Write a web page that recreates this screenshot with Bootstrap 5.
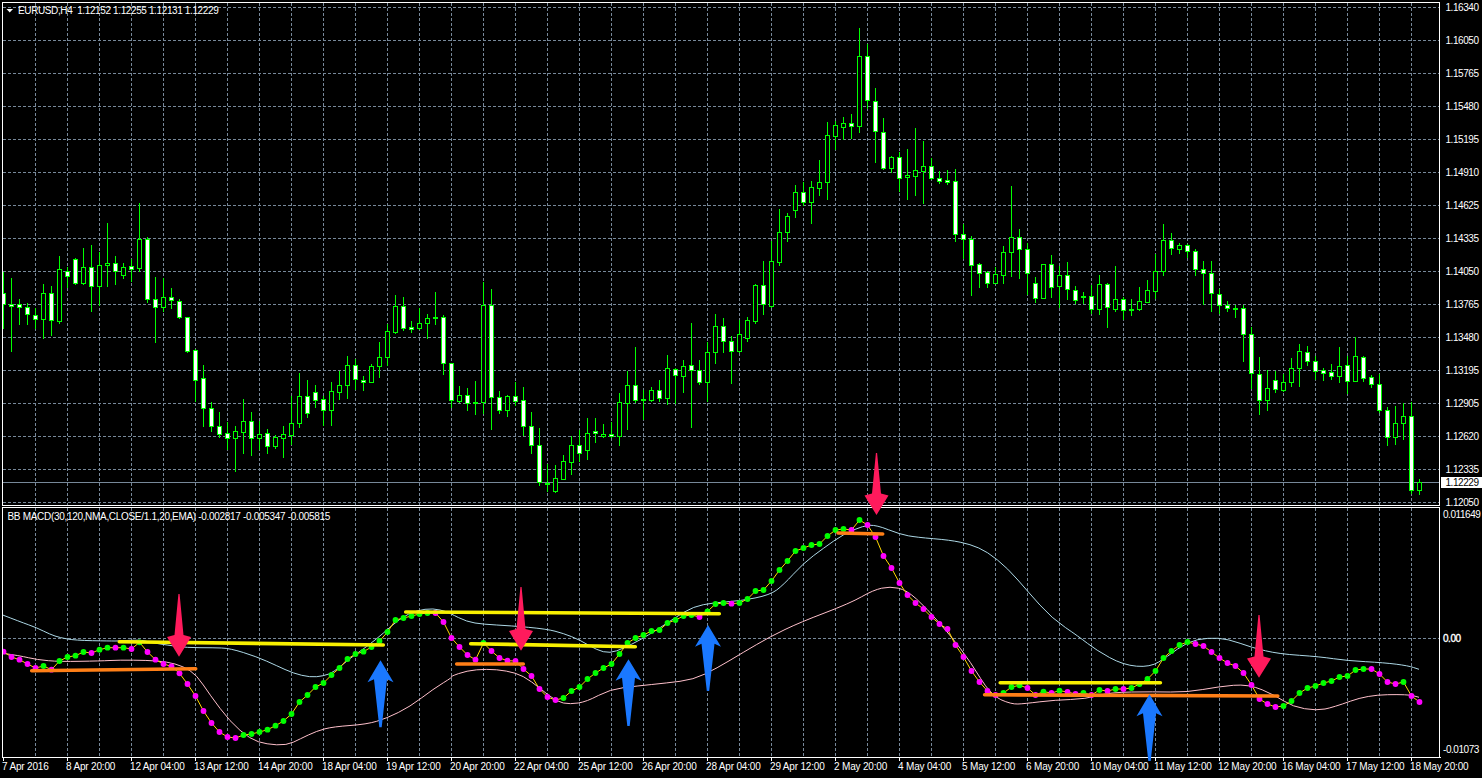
<!DOCTYPE html>
<html lang="en">
<head>
<meta charset="utf-8">
<title>EURUSD,H4</title>
<link href="https://cdn.jsdelivr.net/npm/bootstrap@5.3.0/dist/css/bootstrap.min.css" rel="stylesheet">
<style>
html, body { background: #000; overflow: hidden; }
.chart-stage { width: 1482px; height: 778px; }
.chart-pane { display: block; width: 1482px; flex: none; overflow: visible; }
.pane-price { height: 506px; }
.pane-macd { height: 272px; }
.chart-overlay { width: 1482px; height: 778px; pointer-events: none; }
.lbl { font-family: "Liberation Sans", Arial, sans-serif; font-size: 10px; fill: #fff; letter-spacing: -.18px; }
.lbl-head { letter-spacing: -.38px; }
.lbl-sub { letter-spacing: -.31px; }
.lbl-axis { letter-spacing: -.45px; }
.lbl-dark { fill: #000; }
.lbl-zero { stroke: #fff; stroke-width: .35px; }
.grid-line { stroke: #778899; stroke-width: 1; stroke-dasharray: 3 2; shape-rendering: crispEdges; }
.bid-line { stroke: #778899; stroke-width: 1; shape-rendering: crispEdges; }
.frame-line { stroke: #fff; stroke-width: 1; shape-rendering: crispEdges; }
.wick { stroke: #00ff00; stroke-width: 1; shape-rendering: crispEdges; }
.body-up { fill: #000; stroke: #00ff00; stroke-width: 1; shape-rendering: crispEdges; }
.body-down { fill: #fff; stroke: #00ff00; stroke-width: 1; shape-rendering: crispEdges; }
.band-up { fill: none; stroke: #add8e6; stroke-width: 1; }
.band-down { fill: none; stroke: #ffc0cb; stroke-width: 1; }
.macd-line { fill: none; stroke: #ffd700; stroke-width: 1; }
.dot-up { fill: #00ff00; }
.dot-down { fill: #ff00ff; }
.mark-yellow { stroke: #f8f000; stroke-width: 3.6; stroke-linecap: round; }
.mark-orange { stroke: #ff7f17; stroke-width: 3.6; stroke-linecap: round; }
.arrow-red { fill: #ff1a5c; }
.arrow-blue { fill: #1a78ff; }
</style>
</head>
<body class="m-0 bg-black">
<main class="chart-stage position-relative d-flex flex-column bg-black">
  <svg id="pricePane" class="chart-pane pane-price" viewBox="0 0 1482 506" xmlns="http://www.w3.org/2000/svg"></svg>
  <svg id="macdPane" class="chart-pane pane-macd" viewBox="0 506 1482 272" xmlns="http://www.w3.org/2000/svg"></svg>
  <svg id="marks" class="chart-overlay position-absolute top-0 start-0" viewBox="0 0 1482 778" xmlns="http://www.w3.org/2000/svg"></svg>
</main>
<script src="https://cdn.jsdelivr.net/npm/bootstrap@5.3.0/dist/js/bootstrap.bundle.min.js"></script>
<script>
const X = i => 3 + 8 * i;
const A = [[130,162,65,233,1],[163,167,85,302,1],[163,170,148,222,1],[170,193,160,222,1],[196,208,175,235,1],[130,208,102,263,0],[130,211,108,255,1],[58,212,18,218,0],[62,77,52,110,1],[28,100,25,102,1],[50,100,-6,102,0],[50,109,-15,183,1],[46,109,6,165,0],[38,44,-81,108,0],[38,64,18,102,1],[50,74,38,84,0],[49,56,28,92,1],[-33,55,-141,62,0],[-33,146,-39,155,1],[146,170,82,276,1],[140,170,85,182,0],[142,151,114,174,1],[154,200,148,204,1],[200,302,200,306,1],[301,389,296,452,1],[385,475,346,528,1],[475,527,456,543,1],[527,551,486,560,1],[550,563,517,597,1],[544,563,529,663,0],[514,545,447,609,0],[514,563,486,615,1],[553,563,514,597,0],[550,587,538,609,1],[562,587,556,594,0],[553,563,529,621,0],[520,554,438,582,0],[439,518,370,530,0],[439,488,391,500,1],[427,449,406,470,1],[448,479,439,524,1],[424,479,397,525,0],[406,425,363,447,0],[346,406,319,444,0],[346,388,328,416,1],[390,395,379,420,1],[349,395,343,395,0],[322,349,277,381,0],[244,322,223,345,0],[169,245,136,248,0],
[169,235,141,240,1],[232,236,213,246,1],[220,233,175,236,0],[203,220,193,263,0],[202,203,126,222,1],[202,338,196,371,1],[338,449,338,470,1],[436,452,408,455,0],[436,458,415,480,1],[457,458,393,491,1],[166,455,97,488,0],[166,440,118,537,1],[440,479,423,488,1],[439,479,436,497,0],[439,452,397,465,1],[451,527,411,555,1],[527,584,486,609,1],[584,697,534,705,1],[699,700,642,722,1],[685,722,645,725,0],[634,686,615,686,0],[586,635,558,672,0],[584,608,540,633,1],[550,599,504,627,0],[544,548,504,576,1],[553,559,522,560,0],[553,559,516,560,1],[457,559,430,585,0],[406,458,363,537,0],[406,449,292,456,1],[448,449,420,506,1],[421,449,411,453,0],[421,443,391,454,1],[355,443,316,461,0],[358,376,355,460,1],[349,377,331,426,0],[346,361,220,531,1],[361,395,331,402,1],[307,395,276,452,0],[229,307,193,340,0],[229,272,205,306,1],[274,302,259,399,1],[253,302,211,307,0],[211,263,202,273,0],[106,212,102,219,0],[106,163,33,192,1]];
const B = [[724,857,663,860,0],[637,725,568,735,0],[589,635,580,662,0],[517,569,495,591,0],[517,545,487,556,1],[502,545,484,609,0],[487,503,420,525,0],[346,485,306,537,0],[316,347,304,386,0],[310,320,292,357,0],[310,317,282,354,1],[109,317,24,336,0],[109,241,72,263,1],[244,334,205,426,1],[337,443,294,446,1],[412,443,408,455,0],[412,473,397,513,1],[466,472,388,537,0],[451,467,324,525,0],[439,452,363,548,0],[439,475,415,478,1],[475,482,454,488,1],[481,485,451,492,1],[484,643,447,662,1],[643,658,613,714,1],[658,734,648,825,1],[733,758,728,801,1],[757,788,753,801,1],[763,788,740,788,0],[697,764,679,789,0],[652,697,499,768,0],[652,688,628,774,1],[688,760,668,822,1],[790,833,771,846,1],[733,833,733,833,0],[733,800,706,831,1],[766,797,739,860,0],[766,806,727,837,1],[809,839,799,849,1]];
const C = [[229,232,216,250,1],[229,266,194,278,1],[193,266,166,281,0],[193,262,190,320,1],[238,266,138,272,0],[238,271,231,297,1],[268,271,238,285,1],[244,268,202,270,0],[211,245,181,246,0],[154,212,103,235,0],[61,152,12,166,0],[61,85,40,102,1],[76,86,70,98,0],[76,94,72,110,1],[94,148,88,164,1],[148,160,124,252,1],[160,220,124,272,1],[223,256,208,278,1],[256,265,244,272,1],[263,265,254,291,1],[265,343,256,423,1],[343,460,320,503,1],[463,541,411,581,1],[505,541,451,570,0],[481,508,454,515,1],[487,509,463,514,0],[445,487,415,497,0],[394,445,372,497,0],[397,424,379,435,1],[424,454,408,478,1],[451,460,445,479,1],[457,469,432,476,1],[439,469,381,485,0],[436,484,408,520,1],[409,482,352,484,0],[412,475,408,482,1],[472,493,466,500,1],[493,571,463,577,1],[571,652,562,674,1],[610,652,558,671,0],[589,610,550,658,0],[589,811,547,818,1],[787,811,778,821,0]];
const conv = (rows, base) => rows.map(r => [base + r[0] / 3, base + r[1] / 3, base + r[2] / 3, base + r[3] / 3, r[4]]);
const candles = [...conv(A, 250), ...conv(B, 20), ...conv(C, 220)];

const D1 = [[440,0],[456,0],[464,0],[477,0],[489,0],[483,1],[494,0],[468,1],[456,1],[452,1],[441,1],[444,0],[434,1],[428,1],[428,0],[428,1],[432,0],[412,1],[441,0],[464,0],[477,0],[484,0],[505,0],[537,0],[573,0],[618,0],[654,0],[681,0],[696,0],[699,0],[690,1],[687,1],[681,1],[674,1],[662,1],[648,1],[627,1],[591,1],[570,1],[546,1],[534,1],[510,1],[489,1],[462,1],[447,1],[440,1],[426,1],[408,1],[381,1],[345,1],[339,1],[333,1],[327,1],[324,1],[324,0],[351,0],[399,0],[426,0],[450,0],[464,0],[414,1],[438,0],[459,0],[467,0],[468,0],[492,0],[513,0],[552,0],[576,0],[585,0],[579,1],[558,1],[546,1],[522,1],[504,1],[489,1],[477,1],[447,1],[414,1],[399,1],[390,1],[378,1],[375,1],[354,1],[345,1],[333,1],[330,1],[336,0],[319,1],[297,1],[294,1],[296,0],[294,1],[282,1],[258,1],[255,1],[228,1],[195,1],[168,1],[138,1],[129,1],[120,1],[117,1],[93,1],[75,1],[72,1],[75,0],[45,1],[60,0],[96,0],[153,0],[189,0],[234,0],[270,0],[294,0],[312,0],[336,0],[357,0],[372,0],[420,0],[456,0],[498,0],[531,0],[558,0],[570,0],[564,1],[546,1],[541,1],[549,0],[570,0],[560,1],[564,0],[557,1],[561,0],[567,0],[564,1],[570,0],[555,1],[558,0],[552,1],[552,0],[549,1],[537,1],[522,1],[498,1],[459,1],[438,1],[420,1],[411,1],[417,0],[423,0],[441,0],[459,0],[474,0],[483,0],[504,0],[540,0],[582,0],[597,0],[606,0],[603,1],[588,1],[564,1],[549,1],[543,1],[534,1],[528,1],[516,1],[513,1],[495,1],[492,1],[492,0],[507,0],[531,0],[537,0],[531,1],[573,0],[591,0]];

const z6 = p => [p[0] / 3, 505 + p[1] / 3];
const z7 = p => [450 + p[0] / 3, 505 + p[1] / 3];
const z8 = p => [950 + p[0] / 2.947, 505 + p[1] / 3];
const upper = [...[[8,330],[60,350],[110,368],[150,388],[180,398],[225,406],[330,408],[360,408],[420,404],[450,412],[500,420],[560,428],[640,428],[690,430],[770,455],[830,482],[880,505],[930,517],[970,513],[1000,502],[1050,460],[1100,425],[1150,385],[1200,340],[1250,316],[1300,310],[1340,320]].map(z6), ...[[0,325],[50,350],[100,358],[180,362],[290,372],[340,385],[390,405],[440,435],[480,445],[520,430],[570,405],[620,375],[680,335],[730,305],[790,293],[870,288],[960,270],[1000,240],[1060,175],[1120,130],[1180,88],[1240,62],[1280,60],[1350,88],[1400,97]].map(z7), ...[[0,105],[60,118],[110,140],[170,190],[230,260],[300,340],[380,395],[430,435],[510,480],[590,487],[640,455],[700,410],[760,398],[820,402],[890,428],[970,447],[1090,455],[1170,467],[1280,473],[1350,482],[1382,493]].map(z8)];
const lower = [...[[8,445],[60,452],[110,464],[180,470],[300,468],[360,465],[440,466],[500,470],[550,484],[590,510],[630,570],[690,650],[750,702],[800,718],[860,721],[900,702],[950,678],[1000,665],[1100,658],[1160,640],[1230,605],[1300,552],[1360,515]].map(z6), ...[[0,515],[50,497],[110,492],[170,497],[220,512],[270,550],[320,590],[360,598],[410,590],[480,553],[560,543],[650,534],[730,524],[800,490],[880,442],[960,395],[1050,352],[1200,295],[1270,255],[1320,244],[1370,255],[1430,310]].map(z7), ...[[0,390],[60,470],[120,570],[180,598],[220,596],[310,585],[400,582],[470,562],[600,560],[700,562],[790,545],[880,537],[960,572],[1010,605],[1080,617],[1130,607],[1230,570],[1350,568],[1382,577]].map(z8)];

const smooth = pts => {
  let d = `M${pts[0][0].toFixed(1)} ${pts[0][1].toFixed(1)}`;
  for (let i = 1; i < pts.length - 1; i++) {
    const mx = (pts[i][0] + pts[i + 1][0]) / 2, my = (pts[i][1] + pts[i + 1][1]) / 2;
    d += `Q${pts[i][0].toFixed(1)} ${pts[i][1].toFixed(1)} ${mx.toFixed(1)} ${my.toFixed(1)}`;
  }
  const l = pts[pts.length - 1];
  return d + `L${l[0].toFixed(1)} ${l[1].toFixed(1)}`;
};
const ln = (c, x1, y1, x2, y2) => `<line class="${c}" x1="${x1}" y1="${y1}" x2="${x2}" y2="${y2}"/>`;
const tx = (c, x, y, s) => `<text class="lbl ${c}" x="${x}" y="${y}">${s}</text>`;

/* price pane */
let p = '';
for (let y = 7; y <= 502; y += 33) p += ln('grid-line', 3, y + .5, 1439, y + .5);
for (let x = 35; x <= 1411; x += 32) p += ln('grid-line', x + .5, 3, x + .5, 505);
p += ln('bid-line', 3, 482.5, 1439, 482.5);
candles.forEach((c, i) => {
  const x = X(i), t = Math.round(c[0]), b = Math.round(c[1]);
  p += ln('wick', x + .5, Math.round(c[2]), x + .5, Math.round(c[3]) + 1);
  p += `<rect class="${c[4] ? 'body-down' : 'body-up'}" x="${x - 1.5}" y="${t + .5}" width="4" height="${Math.max(b - t, 1)}"/>`;
});
p += '<rect x="0" y="0" width="2" height="506" fill="#000"/>';
p += ln('frame-line', 2, 2.5, 1440, 2.5) + ln('frame-line', 2.5, 2, 2.5, 506) + ln('frame-line', 2, 505.5, 1440, 505.5) + ln('frame-line', 1439.5, 2, 1439.5, 506);
p += '<polygon points="6.5,9 13,9 9.75,12.6" fill="#fff"/>';
p += tx('lbl-head', 18, 14, 'EURUSD,H4&#160;&#160;1.12152 1.12255 1.12131 1.12229');
const prices = ['1.16340','1.16050','1.15765','1.15480','1.15195','1.14910','1.14625','1.14335','1.14050','1.13765','1.13480','1.13195','1.12905','1.12620','1.12335','1.12050'];
prices.forEach((s, i) => { p += tx('lbl-axis', 1445.5, 7 + 33 * i + 4, s); });
p += '<rect x="1441" y="477" width="41" height="11" fill="#fff"/>';
p += tx('lbl-axis lbl-dark', 1445.5, 486, '1.12229');
document.getElementById('pricePane').innerHTML = p;

/* indicator pane */
let m = '';
m += ln('grid-line', 3, 638.5, 1439, 638.5);
for (let x = 35; x <= 1411; x += 32) m += ln('grid-line', x + .5, 508, x + .5, 757);
m += `<path class="band-up" d="${smooth(upper)}"/><path class="band-down" d="${smooth(lower)}"/>`;
const dots = D1.map((d, i) => [X(i) + .5, 505 + d[0] / 3, d[1]]);
m += `<polyline class="macd-line" points="${dots.map(d => d[0] + ',' + d[1].toFixed(1)).join(' ')}"/>`;
dots.forEach(d => { m += `<circle class="${d[2] ? 'dot-up' : 'dot-down'}" cx="${d[0]}" cy="${d[1].toFixed(1)}" r="2.9"/>`; });
m += '<rect x="0" y="506" width="2" height="252" fill="#000"/>';
m += ln('frame-line', 2, 507.5, 1440, 507.5) + ln('frame-line', 2.5, 507, 2.5, 758) + ln('frame-line', 2, 757.5, 1441, 757.5) + ln('frame-line', 1439.5, 507, 1439.5, 758);
m += tx('lbl-sub', 7.5, 520, 'BB MACD(30,120,NMA,CLOSE/1.1,20,EMA) -0.002817 -0.005347 -0.005815');
m += tx('lbl-axis', 1443, 518, '0.011649') + tx('lbl-axis lbl-zero', 1443, 642, '0.00') + tx('lbl-axis', 1443, 753, '-0.01073');
const times = ['7 Apr 2016','8 Apr 20:00','12 Apr 04:00','13 Apr 12:00','14 Apr 20:00','18 Apr 04:00','19 Apr 12:00','20 Apr 20:00','22 Apr 04:00','25 Apr 12:00','26 Apr 20:00','28 Apr 04:00','29 Apr 12:00','2 May 20:00','4 May 04:00','5 May 12:00','6 May 20:00','10 May 04:00','11 May 12:00','12 May 20:00','16 May 04:00','17 May 12:00','18 May 20:00'];
times.forEach((s, i) => {
  const x = 3 + 64 * i;
  m += ln('frame-line', x + .5, 758, x + .5, 761);
  m += tx('', x === 3 ? 2 : x - 1, 770, s);
});
document.getElementById('macdPane').innerHTML = m;

/* hand-drawn annotations */
let a = '';
[[119.3,641.7,383.3,645],[405.7,612,719.3,613.7],[470.7,643.7,635.3,646.7],[1000.2,682.7,1160.4,682.7]].forEach(l => { a += ln('mark-yellow', ...l); });
[[31.7,670.7,195.7,668.7],[456.7,664,523.3,664],[838,533,882.7,534],[984.6,694.7,1277.8,696]].forEach(l => { a += ln('mark-orange', ...l); });
const down = (x, t, w, b) => `<polygon class="arrow-red" points="${x-.6},${t} ${x+.6},${t} ${x+4.5},${w-1} ${x+12},${w+1} ${x},${b} ${x-12},${w+1} ${x-4.5},${w-1}"/>`;
const up = (x, t, w, b) => `<polygon class="arrow-blue" points="${x},${t} ${x+13},${w} ${x+6.5},${w-3} ${x+1.2},${b} ${x-1.2},${b} ${x-6.5},${w-3} ${x-13},${w}"/>`;
a += down(179, 594, 636, 656.7) + down(521, 587, 630, 650.7) + down(876.5, 453, 494.5, 515) + down(1259, 615, 657.5, 677.7);
a += up(380.5, 660.3, 682.3, 727.3) + up(628.5, 659.3, 680.7, 726) + up(708, 625, 646.7, 691) + up(1149.5, 694.3, 716.3, 761);
document.getElementById('marks').innerHTML = a;
</script>
</body>
</html>
